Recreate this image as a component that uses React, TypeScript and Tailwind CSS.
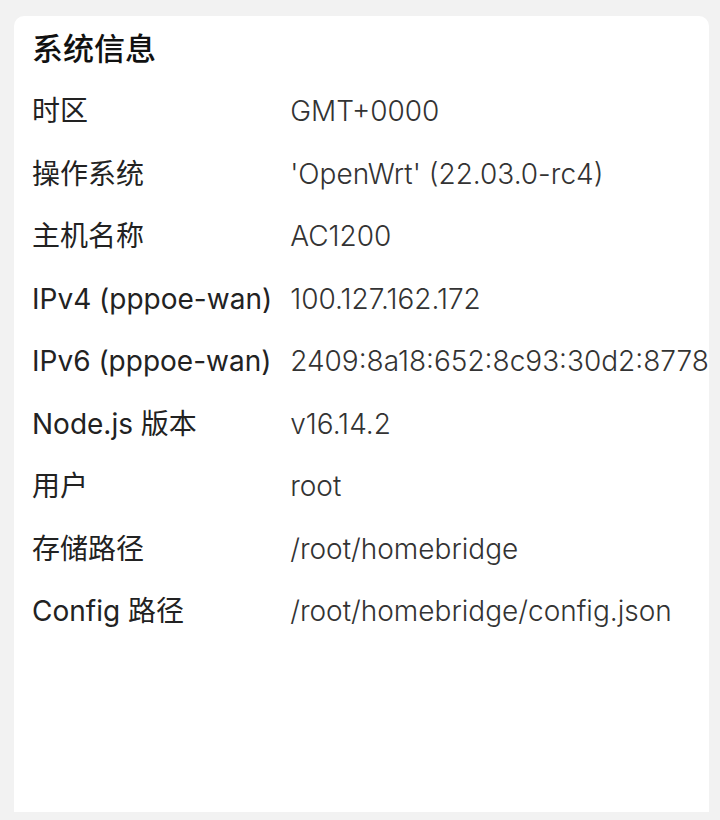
const ROWS: [string, string][] = [
  ["时区", "GMT+0000"],
  ["操作系统", "'OpenWrt' (22.03.0-rc4)"],
  ["主机名称", "AC1200"],
  ["IPv4 (pppoe-wan)", "100.127.162.172"],
  ["IPv6 (pppoe-wan)", "2409:8a18:652:8c93:30d2:8778"],
  ["Node.js 版本", "v16.14.2"],
  ["用户", "root"],
  ["存储路径", "/root/homebridge"],
  ["Config 路径", "/root/homebridge/config.json"],
];

export default function App() {
  return (
    <div
      className="h-[820px] w-[720px] overflow-hidden bg-[#f2f2f2] pl-[14px] pt-[16px]"
      style={{ fontFamily: 'Inter, "Noto Sans CJK SC", sans-serif' }}
    >
      <div className="h-[796px] w-[695px] rounded-t-[10px] bg-white pl-[18px] pt-[2px]">
        <h2 className="flex h-[62px] items-center text-[31px] font-medium text-[#111]">系统信息</h2>
        <div className="grid grid-cols-[auto_1fr] gap-x-[18px]">
          {ROWS.map(([label, value]) => (
            <div key={label} className="contents">
              <div className="flex h-[62.5px] items-center whitespace-nowrap text-[28px] text-[#222]">
                {label}
              </div>
              <div className="flex h-[62.5px] items-center whitespace-nowrap text-[28px] font-light text-[#333]">
                {value}
              </div>
            </div>
          ))}
        </div>
      </div>
    </div>
  );
}
